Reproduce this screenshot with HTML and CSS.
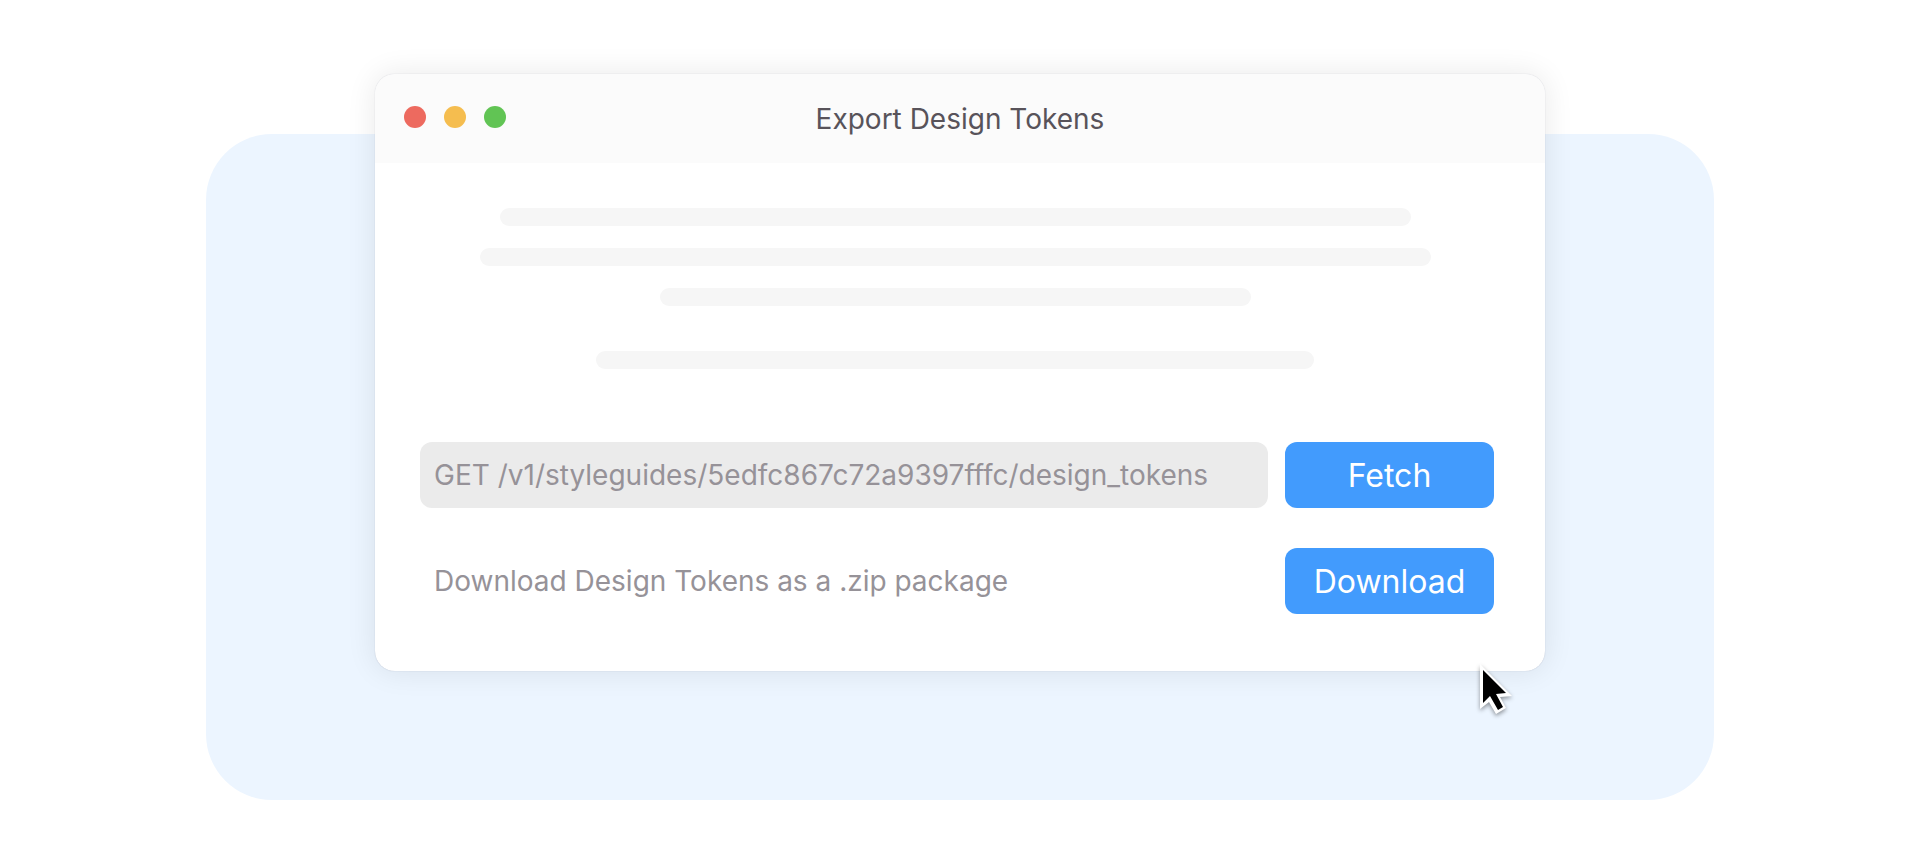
FILE: index.html
```html
<!DOCTYPE html>
<html lang="en">
<head>
  <meta charset="UTF-8">
  <meta name="viewport" content="width=device-width, initial-scale=1.0">
  <title>Export Design Tokens</title>
  <link rel="stylesheet" href="styles.css">
</head>
<body>

  <main class="backdrop">
    <section class="window">
      <header class="title-bar">
        <div class="dots">
          <span class="dot dot-red"></span>
          <span class="dot dot-yellow"></span>
          <span class="dot dot-green"></span>
        </div>
        <h1 class="title">Export Design Tokens</h1>
      </header>

      <div class="window-body">
        <div class="placeholder">
          <span class="line line-long"></span>
          <span class="line line-full"></span>
          <span class="line line-short"></span>
          <span class="line line-medium"></span>
        </div>

        <form class="actions">
          <div class="row">
            <input class="endpoint" type="text" aria-label="Endpoint" value="GET /v1/styleguides/5edfc867c72a9397fffc/design_tokens" readonly>
            <button class="btn" type="button">Fetch</button>
          </div>
          <div class="row">
            <p class="hint" id="download-hint">Download Design Tokens as a .zip package</p>
            <button class="btn" type="button" aria-describedby="download-hint">Download</button>
          </div>
        </form>
      </div>

      <svg class="cursor" width="36" height="54" viewBox="0 0 36 54" aria-hidden="true">
        <path d="M2 0 L2 45 L11 38 L18 50 L28 44 L22 33 L34 32 Z" fill="#fff"/>
        <path d="M5 6 L5 39 L12 32 L20 46 L25 43 L18 30 L28 29 Z" fill="#000"/>
      </svg>
    </section>
  </main>

</body>
</html>
```

FILE: styles.css
```css
/* Global Reset */
* {
  margin: 0;
  padding: 0;
  box-sizing: border-box;
}

body {
  font-family: 'Inter', 'Liberation Sans', sans-serif;
  font-size: 28px;
  line-height: 34px;
  color: #969298;
  background-color: #fff;
  padding: 134px 24px 57px;
}

/* Blue Backdrop */
.backdrop {
  max-width: 1508px;
  margin: 0 auto;
  padding: 0 24px 129px;
  background-color: #ecf5ff;
  border-radius: 66px;
  display: flex;
  justify-content: center;
}

/* App Window */
.window {
  position: relative;
  width: 100%;
  max-width: 1170px;
  margin-top: -60px;
  background-color: #fff;
  border-radius: 20px;
  box-shadow: 0 0 1px rgba(40, 50, 90, 0.3), 0 0 30px rgba(0, 0, 0, 0.09);
}

.title-bar {
  display: grid;
  grid-template-columns: 1fr auto 1fr;
  align-items: center;
  height: 89px;
  padding: 0 29px;
  background-color: #fbfbfb;
  border-radius: 20px 20px 0 0;
}

.dots {
  display: flex;
  gap: 18px;
  padding-bottom: 4px;
}

.dot {
  width: 22px;
  height: 22px;
  border-radius: 50%;
}

.dot-red {
  background-color: #ed6a5f;
}

.dot-yellow {
  background-color: #f5bd4f;
}

.dot-green {
  background-color: #61c454;
}

.title {
  font-size: 28px;
  font-weight: 400;
  color: #58535a;
}

.window-body {
  padding: 45px 51px 57px 45px;
}

/* Placeholder Text */
.placeholder {
  display: flex;
  flex-direction: column;
  align-items: center;
  gap: 22px;
  padding-right: 4px;
}

.line {
  height: 18px;
  max-width: 100%;
  background-color: #f6f6f6;
  border-radius: 9px;
}

.line-long {
  width: 911px;
}

.line-full {
  width: 951px;
}

.line-short {
  width: 591px;
}

.line-medium {
  width: 718px;
  margin-top: 23px;
}

/* Actions */
.actions {
  display: flex;
  flex-direction: column;
  gap: 40px;
  margin-top: 73px;
}

.row {
  display: flex;
  align-items: center;
  gap: 17px;
}

.endpoint,
.hint {
  flex: 1;
  min-width: 0;
  padding: 0 14px;
}

.endpoint {
  height: 66px;
  font: inherit;
  color: inherit;
  background-color: #ebebeb;
  border: none;
  border-radius: 12px;
  outline: none;
}

.btn {
  width: 209px;
  height: 66px;
  font-family: inherit;
  font-size: 32px;
  font-weight: 400;
  color: #fff;
  background-color: #429bfd;
  border: none;
  border-radius: 12px;
  cursor: pointer;
}

/* Mouse Pointer */
.cursor {
  position: absolute;
  right: 31px;
  bottom: -47px;
  filter: drop-shadow(0 2px 2px rgba(0, 0, 0, 0.4));
}
```
